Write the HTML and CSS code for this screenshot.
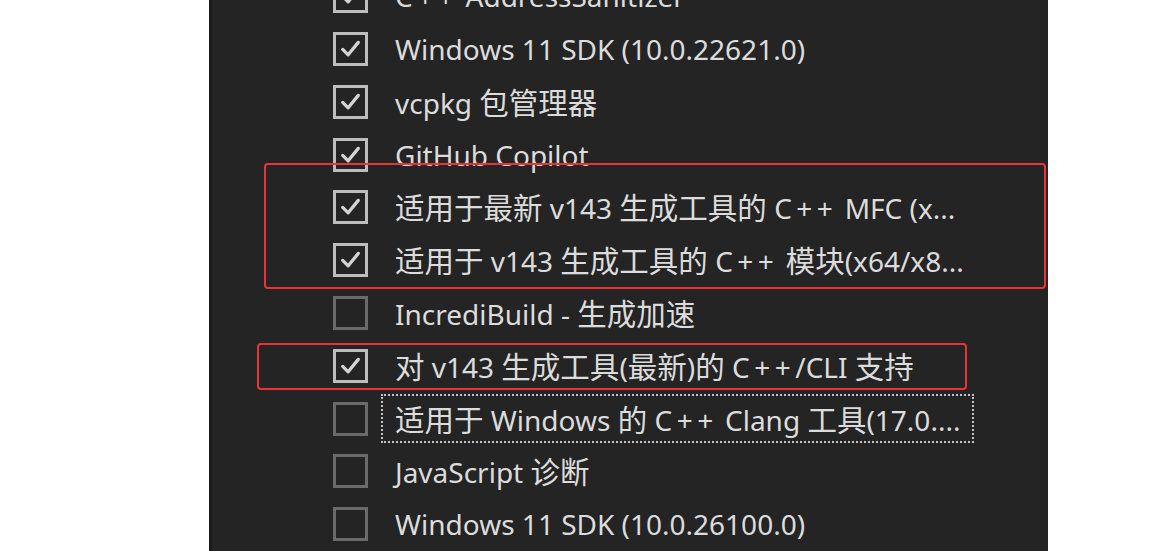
FILE: index.html
```html
<!DOCTYPE html>
<html lang="zh-CN">
<head>
<meta charset="utf-8">
<title>Components</title>
<link rel="stylesheet" href="styles.css">
</head>
<body>
<div class="page">
  <div class="panel">
    <ul class="list">
      <li class="row"><span class="box checked"><svg viewBox="0 0 36 36"><path d="M8 18.5 L15 25.5 L28 9.5"/></svg></span><span class="label"><span class="pp">C++</span> AddressSanitizer</span></li>
      <li class="row"><span class="box checked"><svg viewBox="0 0 36 36"><path d="M8 18.5 L15 25.5 L28 9.5"/></svg></span><span class="label">Windows 11 SDK (10.0.22621.0)</span></li>
      <li class="row"><span class="box checked"><svg viewBox="0 0 36 36"><path d="M8 18.5 L15 25.5 L28 9.5"/></svg></span><span class="label">vcpkg <span class="cjk">包管理器</span></span></li>
      <li class="row"><span class="box checked"><svg viewBox="0 0 36 36"><path d="M8 18.5 L15 25.5 L28 9.5"/></svg></span><span class="label">GitHub Copilot</span></li>
      <li class="row"><span class="box checked"><svg viewBox="0 0 36 36"><path d="M8 18.5 L15 25.5 L28 9.5"/></svg></span><span class="label"><span class="cjk">适用于最新</span> v143 <span class="cjk">生成工具的</span> <span class="pp">C++</span> MFC (x...</span></li>
      <li class="row"><span class="box checked"><svg viewBox="0 0 36 36"><path d="M8 18.5 L15 25.5 L28 9.5"/></svg></span><span class="label"><span class="cjk">适用于</span> v143 <span class="cjk">生成工具的</span> <span class="pp">C++</span> <span class="cjk">模块</span>(x64/x8...</span></li>
      <li class="row"><span class="box"></span><span class="label">IncrediBuild - <span class="cjk">生成加速</span></span></li>
      <li class="row"><span class="box checked"><svg viewBox="0 0 36 36"><path d="M8 18.5 L15 25.5 L28 9.5"/></svg></span><span class="label"><span class="cjk">对</span> v143 <span class="cjk">生成工具</span>(<span class="cjk">最新</span>)<span class="cjk">的</span> <span class="pp">C++</span>/CLI <span class="cjk">支持</span></span></li>
      <li class="row"><span class="box"></span><span class="label focus"><span class="cjk">适用于</span> Windows <span class="cjk">的</span> <span class="pp">C++</span> Clang <span class="cjk">工具</span>(17.0....</span></li>
      <li class="row"><span class="box"></span><span class="label">JavaScript <span class="cjk">诊断</span></span></li>
      <li class="row"><span class="box"></span><span class="label">Windows 11 SDK (10.0.26100.0)</span></li>
    </ul>
    <div class="mark mark-a"></div>
    <div class="mark mark-b"></div>
  </div>
</div>
</body>
</html>
```

FILE: styles.css
```css
html, body {
  margin: 0;
  padding: 0;
  background: #ffffff;
}
.page {
  width: 1172px;
  height: 551px;
  overflow: hidden;
}
.panel {
  position: relative;
  margin-left: 209px;
  width: 836px;
  height: 551px;
  background: #242424;
  border-left: 3px solid #1a1a1a;
  overflow: hidden;
}
.list {
  list-style: none;
  margin: -30px 0 0 0;
  padding: 0;
}
.row {
  height: 52.78px;
  display: flex;
  align-items: center;
  padding-left: 121px;
  font-family: "Noto Sans", "Noto Sans CJK SC", sans-serif;
  font-size: 28px;
  color: #dcdcdc;
  white-space: nowrap;
}
.cjk {
  font-family: "Noto Sans CJK SC", sans-serif;
  font-size: 29.5px;
}
.pp {
  letter-spacing: 4.5px;
}
.box {
  box-sizing: border-box;
  width: 35px;
  height: 34px;
  border: 3px solid #6a6a6a;
  flex: none;
  display: flex;
  align-items: center;
  justify-content: center;
  margin-right: 27px;
}
.box.checked {
  border-color: #bdbdbd;
}
.box svg {
  width: 29px;
  height: 28px;
}
.box path {
  fill: none;
  stroke: #d4d4d4;
  stroke-width: 4.2;
  stroke-linecap: round;
  stroke-linejoin: round;
}
.label {
  line-height: 1;
}
.label.focus {
  margin-left: -14px;
  padding: 8px 12px 7px 12px;
  border: 2px dotted #c4c4c4;
}
.mark {
  position: absolute;
  box-sizing: border-box;
  border: 2px solid #e83434;
  border-radius: 4px;
}
.mark-a {
  left: 52px;
  top: 163px;
  width: 782px;
  height: 126px;
}
.mark-b {
  left: 45px;
  top: 343px;
  width: 710px;
  height: 47px;
}
```
